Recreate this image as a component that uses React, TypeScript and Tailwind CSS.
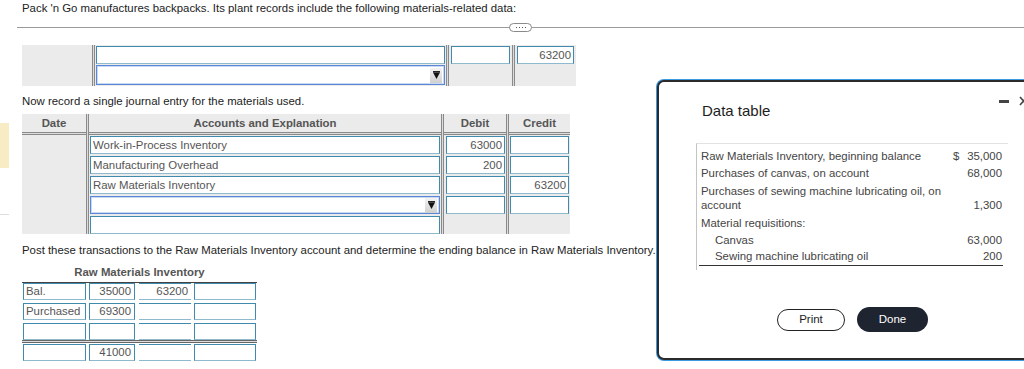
import React from "react";

const inputCls =
  "h-[18px] bg-white border border-[#3f8aad] border-b-[#8fb9cd] text-[11.4px] leading-[16px] text-[#555] px-[2px] whitespace-nowrap overflow-hidden";

function Dbl() {
  return <div className="w-[3px] shrink-0 self-stretch border-x border-[#8a8a8a] bg-[#dcdcdc]" />;
}

function SelectBox({ w, h }: { w: string; h: string }) {
  return (
    <div className={`${w} ${h} bg-white border border-[#5a88d6] shadow-[inset_0_0_0_1px_#c9d8f3] flex justify-end items-center pr-[2px]`}>
      <div className="w-[12px] h-[15px] bg-gradient-to-b from-[#f4f4f4] to-[#cfcfcf] flex items-center justify-center">
        <svg width="7" height="8" viewBox="0 0 7 8">
          <rect x="0" y="0" width="7" height="1.5" fill="#222" />
          <polygon points="0,1.5 7,1.5 3.5,8" fill="#111" />
        </svg>
      </div>
    </div>
  );
}

function TRow({ a, b, c, d }: { a?: string; b?: string; c?: string; d?: string }) {
  const box = "h-[17px] bg-white border border-[#3f8aad] border-b-[#8fb9cd] text-[11.4px] leading-[15px] text-[#555]";
  return (
    <div className="flex">
      <div className={`${box} ml-[1px] w-[63px] pl-[2px]`}>{a}</div>
      <div className={`${box} ml-[3px] w-[46px] text-right pr-[3px]`}>{b}</div>
      <div className="h-[17px] ml-[4px] w-[52px] border-y border-[#3f8aad] border-b-[#8fb9cd] text-[11.4px] leading-[15px] text-[#555] text-right pr-[3px]">
        {c}
      </div>
      <div className={`${box} ml-[3px] w-[62px]`}>{d}</div>
    </div>
  );
}

function DataRow({
  label,
  amt,
  dollar,
  indent,
  last,
}: {
  label: string;
  amt?: string;
  dollar?: boolean;
  indent?: boolean;
  last?: boolean;
}) {
  return (
    <div className={`flex h-[17px] items-center ${last ? "border-b border-[#333]" : ""}`}>
      <div className={`flex-1 whitespace-nowrap ${indent ? "pl-[16px]" : "pl-[2px]"}`}>{label}</div>
      <div className="w-[50px] flex justify-between pr-[1px]">
        <span>{dollar ? "$" : ""}</span>
        <span>{amt}</span>
      </div>
    </div>
  );
}

export default function App() {
  return (
    <div
      className="relative w-[1024px] h-[369px] overflow-hidden bg-white flex"
      style={{ fontFamily: '"Liberation Sans", Arial, sans-serif' }}
    >
      {/* left strip */}
      <div className="w-[9px] shrink-0 flex flex-col">
        <div className="mt-[123px] h-[45px] bg-[#f8ecc4]" />
        <div className="mt-[46px] h-px bg-[#dddddd]" />
      </div>

      {/* main column */}
      <div className="flex-1 pl-[13px]">
        <div className="pt-[2px] text-[11.4px] leading-[13px] text-[#222] whitespace-nowrap">
          Pack 'n Go manufactures backpacks. Its plant records include the following materials-related data:
        </div>

        <div className="relative -ml-[5px] mt-[12px] h-px bg-[#9a9a9a]">
          <div className="absolute left-[492px] -top-[4px] w-[23px] h-[9px] rounded-full border border-[#8a8a8a] bg-white flex items-center justify-center gap-[2px]">
            <span className="w-[1px] h-[1px] bg-[#555]" />
            <span className="w-[1px] h-[1px] bg-[#555]" />
            <span className="w-[1px] h-[1px] bg-[#555]" />
            <span className="w-[1px] h-[1px] bg-[#555]" />
          </div>
        </div>

        {/* table 1 */}
        <div className="mt-[17px] flex h-[41px] w-[554px] bg-[#ebebeb]">
          <div className="w-[70px]" />
          <Dbl />
          <div className="w-[351px] flex flex-col pl-[1px] pt-[1px] gap-[1px]">
            <div className={`${inputCls} w-[349px]`} />
            <SelectBox w="w-[349px]" h="h-[20px]" />
          </div>
          <Dbl />
          <div className="w-[63px] pl-[2px] pt-[1px]">
            <div className={`${inputCls} w-[59px]`} />
          </div>
          <Dbl />
          <div className="w-[61px] pl-[2px] pt-[1px]">
            <div className={`${inputCls} w-[57px] text-right`}>63200</div>
          </div>
        </div>

        <div className="mt-[9px] text-[11.4px] leading-[13px] text-[#222]">
          Now record a single journal entry for the materials used.
        </div>

        {/* journal table */}
        <div className="mt-[6px] flex w-[548px] bg-[#ebebeb]">
          <div className="w-[64px] flex flex-col">
            <div className="h-[18px] text-center text-[11.4px] leading-[18px] font-bold text-[#555]">Date</div>
            <div className="h-[3px] border-y border-[#8a8a8a] bg-[#dcdcdc]" />
            <div className="h-[99px]" />
          </div>
          <Dbl />
          <div className="w-[352px] flex flex-col">
            <div className="h-[18px] text-center text-[11.4px] leading-[18px] font-bold text-[#555]">
              Accounts and Explanation
            </div>
            <div className="h-[3px] border-y border-[#8a8a8a] bg-[#dcdcdc]" />
            <div className="h-[99px] pl-[1px] pt-[1px] flex flex-col gap-[2px]">
              <div className={`${inputCls} w-[350px]`}>Work-in-Process Inventory</div>
              <div className={`${inputCls} w-[350px]`}>Manufacturing Overhead</div>
              <div className={`${inputCls} w-[350px]`}>Raw Materials Inventory</div>
              <SelectBox w="w-[350px]" h="h-[18px]" />
              <div className={`${inputCls} w-[350px]`} />
            </div>
          </div>
          <Dbl />
          <div className="w-[62px] flex flex-col">
            <div className="h-[18px] text-center text-[11.4px] leading-[18px] font-bold text-[#555]">Debit</div>
            <div className="h-[3px] border-y border-[#8a8a8a] bg-[#dcdcdc]" />
            <div className="h-[99px] pl-[2px] pt-[1px] flex flex-col gap-[2px]">
              <div className={`${inputCls} w-[59px] text-right`}>63000</div>
              <div className={`${inputCls} w-[59px] text-right`}>200</div>
              <div className={`${inputCls} w-[59px]`} />
              <div className={`${inputCls} w-[59px]`} />
            </div>
          </div>
          <Dbl />
          <div className="w-[61px] flex flex-col">
            <div className="h-[18px] text-center text-[11.4px] leading-[18px] font-bold text-[#555]">Credit</div>
            <div className="h-[3px] border-y border-[#8a8a8a] bg-[#dcdcdc]" />
            <div className="h-[99px] pl-[1px] pt-[1px] flex flex-col gap-[2px]">
              <div className={`${inputCls} w-[59px]`} />
              <div className={`${inputCls} w-[59px]`} />
              <div className={`${inputCls} w-[59px] text-right`}>63200</div>
              <div className={`${inputCls} w-[59px]`} />
            </div>
          </div>
        </div>

        <div className="mt-[10px] text-[11.4px] leading-[13px] text-[#222] whitespace-nowrap">
          Post these transactions to the Raw Materials Inventory account and determine the ending balance in Raw
          Materials Inventory.
        </div>

        {/* T account */}
        <div className="w-[235px]">
          <div className="mt-[9px] text-center text-[11.4px] leading-[13px] font-bold text-[#555]">
            Raw Materials Inventory
          </div>
          <div className="mt-[3px] border-t border-[#444]" />
          <div className="flex flex-col gap-[3px]">
            <TRow a="Bal." b="35000" c="63200" />
            <TRow a="Purchased" b="69300" />
            <TRow />
          </div>
          <div className="h-[3px] border-y border-[#666] bg-[#ddd]" />
          <div className="mt-[1px]">
            <TRow b="41000" />
          </div>
        </div>
      </div>

      {/* modal overlay */}
      <div className="absolute left-[657px] top-[80px] w-[391px] h-[280px] rounded-[7px] border-2 border-[#2b2b2b] shadow-[0_0_0_1px_#3b9be0] bg-white">
        <div className="flex items-start justify-between pl-[43px] pr-[18px] pt-[14px]">
          <div className="mt-[6px] text-[15px] leading-[18px] text-[#1d1d1d]">Data table</div>
          <div className="flex gap-[10px]">
            <div className="mt-[4px] w-[10px] h-[3px] bg-[#444]" />
            <svg width="9" height="10" viewBox="0 0 9 10">
              <path d="M1 1 L8 9 M8 1 L1 9" stroke="#444" strokeWidth="1.6" />
            </svg>
          </div>
        </div>

        <div className="ml-[37px] mt-[23px] w-[312px] border-l border-l-[#c4c4c4] border-t border-t-[#e2e2e2] pt-[4px] pb-[4px]">
          <div className="ml-[2px] w-[304px] text-[11.4px] text-[#444]">
            <DataRow label="Raw Materials Inventory, beginning balance" amt="35,000" dollar />
            <DataRow label="Purchases of canvas, on account" amt="68,000" />
            <div className="flex pt-[2px] pb-[3px] leading-[14px]">
              <div className="flex-1 pl-[2px] pr-[6px]">Purchases of sewing machine lubricating oil, on account</div>
              <div className="w-[50px] flex items-end justify-end pr-[1px]">1,300</div>
            </div>
            <DataRow label="Material requisitions:" />
            <DataRow label="Canvas" amt="63,000" indent />
            <DataRow label="Sewing machine lubricating oil" amt="200" indent last />
          </div>
        </div>

        <div className="mt-[37px] flex justify-center items-center gap-[12px]">
          <div className="w-[68px] h-[22px] rounded-full border-[1.5px] border-[#222] flex items-center justify-center text-[11.5px] text-[#222]">
            Print
          </div>
          <div className="w-[71px] h-[25px] rounded-full bg-[#1e2430] flex items-center justify-center text-[11.5px] text-white">
            Done
          </div>
        </div>
      </div>
    </div>
  );
}
